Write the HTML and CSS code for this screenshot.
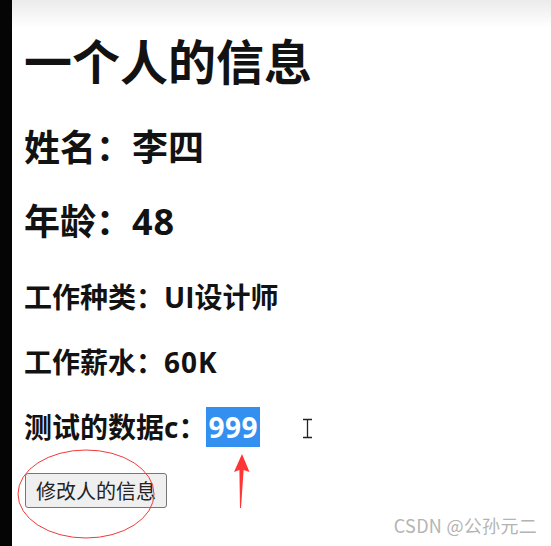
FILE: index.html
```html
<!DOCTYPE html>
<html lang="zh-CN">
<head>
<meta charset="utf-8">
<title>一个人的信息</title>
<link rel="stylesheet" href="styles.css">
</head>
<body>
<div class="page">
  <div class="bar"></div>
  <main class="content">
    <h1 class="title">一个人的信息</h1>
    <h2 class="field field-name">姓名：李四</h2>
    <h2 class="field field-age">年龄：<span class="num">48</span></h2>
    <h3 class="item item-first">工作种类：UI设计师</h3>
    <h3 class="item">工作薪水：<span class="num">60K</span></h3>
    <h3 class="item">测试的数据c：<span class="sel">999</span></h3>
    <div class="actions">
      <button class="btn" type="button">修改人的信息</button>
    </div>
  </main>
  <svg class="marks" width="551" height="546" viewBox="0 0 551 546" xmlns="http://www.w3.org/2000/svg">
    <ellipse cx="86" cy="494" rx="68" ry="44" fill="none" stroke="#f03a3a" stroke-width="1"/>
    <path d="M242 454 L249.5 472 L243.6 470 L241 508 L240 508 L239.4 470 L234 472 Z" fill="#ff3535"/>
    <path d="M303 419.5 H312 M307.5 419.5 V437.5 M303 437.5 H312" fill="none" stroke="#222" stroke-width="1.3"/>
  </svg>
  <div class="watermark">CSDN @公孙元二</div>
</div>
</body>
</html>
```

FILE: styles.css
```css
html, body {
  margin: 0;
  padding: 0;
  background: #fff;
}

.page {
  position: relative;
  width: 551px;
  height: 546px;
  display: flex;
  overflow: hidden;
  font-family: "Open Sans", "Noto Sans CJK SC", sans-serif;
  color: #121212;
}

.bar {
  width: 12px;
  flex: none;
  background: #050505;
}

.content {
  flex: 1;
  display: flex;
  flex-direction: column;
  align-items: flex-start;
  padding-left: 12px;
  background: linear-gradient(#ebebeb, #ffffff 28px);
}

.title {
  margin: 32px 0 0;
  font-size: 48px;
  line-height: 60px;
  font-weight: 700;
}

.field {
  margin: 30px 0 0;
  font-size: 36px;
  line-height: 44px;
  font-weight: 700;
}

.field-name {
  margin-top: 34px;
}

.item {
  margin: 29px 0 0;
  font-size: 28px;
  line-height: 36px;
  font-weight: 700;
}

.item-first {
  margin-top: 35px;
}

.num {
  letter-spacing: 1px;
}

.sel {
  background: #3390f0;
  color: #fff;
  padding: 1px 2px;
  letter-spacing: 0.5px;
}

.actions {
  margin-top: 28px;
}

.btn {
  height: 35px;
  margin-left: 1px;
  padding: 0 10px;
  font-family: "Noto Sans CJK SC", sans-serif;
  font-size: 20px;
  color: #222;
  background: #efefef;
  border: 1px solid #767676;
  border-radius: 3px;
}

.marks {
  position: absolute;
  left: 0;
  top: 0;
  pointer-events: none;
}

.watermark {
  position: absolute;
  right: 14px;
  bottom: 8px;
  font-family: "Noto Sans CJK SC", sans-serif;
  font-size: 18px;
  color: #b4b4b4;
  letter-spacing: 0.3px;
}
```
